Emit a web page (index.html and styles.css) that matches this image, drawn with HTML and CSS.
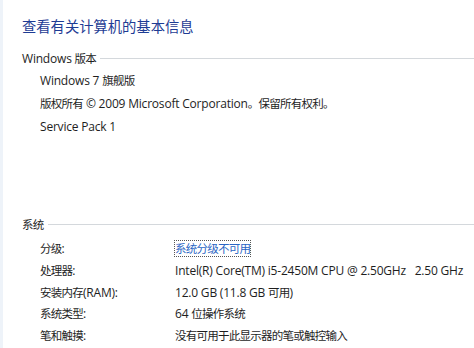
FILE: index.html
```html
<!DOCTYPE html>
<html lang="zh-CN">
<head>
    <meta charset="UTF-8">
    <title>系统</title>
    <link rel="stylesheet" href="styles.css">
</head>
<body>
    <div class="page">
        <h1 class="title">查看有关计算机的基本信息</h1>

        <div class="group-head">
            <span>Windows <span class="zh">版本</span></span>
            <span class="rule"></span>
        </div>
        <div class="edition">
            <div class="line">Windows 7 <span class="zh">旗舰版</span></div>
            <div class="line"><span class="zh">版权所有</span> © 2009 Microsoft Corporation<span class="zh">。保留所有权利。</span></div>
            <div class="line">Service Pack 1</div>
        </div>

        <div class="group-head system-head">
            <span class="zh">系统</span>
            <span class="rule"></span>
        </div>
        <div class="props">
            <div class="label"><span class="zh">分级</span>:</div>
            <div class="value"><a class="rating zh" href="#">系统分级不可用</a></div>

            <div class="label"><span class="zh">处理器</span>:</div>
            <div class="value">Intel(R) Core(TM) i5-2450M CPU @ 2.50GHz&nbsp;&nbsp;&nbsp;2.50 GHz</div>

            <div class="label"><span class="zh">安装内存</span>(RAM):</div>
            <div class="value">12.0 GB (11.8 GB <span class="zh">可用</span>)</div>

            <div class="label"><span class="zh">系统类型</span>:</div>
            <div class="value">64 <span class="zh">位操作系统</span></div>

            <div class="label"><span class="zh">笔和触摸</span>:</div>
            <div class="value zh">没有可用于此显示器的笔或触控输入</div>
        </div>
    </div>
</body>
</html>
```

FILE: styles.css
```css
body {
    margin: 0;
    background: #fff;
    font-family: "Open Sans", "Noto Sans CJK SC", sans-serif;
    font-size: 12px;
    letter-spacing: -0.2px;
    color: #1e1e1e;
}

/* CJK runs are a bit narrower than the full em in the original */
.zh {
    font-size: 11.5px;
    letter-spacing: -0.75px;
}

.page {
    border-left: 3px solid #eef3f9;
    min-height: 348px;
    box-sizing: border-box;
    padding: 0 0 0 19px;
}

.title {
    margin: 0;
    padding-top: 16px;
    font-size: 14.3px;
    font-weight: normal;
    letter-spacing: 0;
    line-height: 22px;
    color: #1e3c94;
}

.group-head {
    display: flex;
    align-items: center;
    margin-top: 9px;
    height: 22px;
}

.rule {
    flex: 1;
    height: 0;
    border-top: 1px solid #d4d8dc;
    margin-left: 4px;
    margin-top: 1px;
}

.edition {
    padding-left: 18px;
    margin-top: 0;
}

.line {
    line-height: 23px;
}

.system-head {
    margin-top: 75px;
}

.props {
    display: grid;
    grid-template-columns: 135px auto;
    padding-left: 18px;
    margin-top: 3px;
    line-height: 21.75px;
}

.rating {
    color: #2b66c4;
    text-decoration: none;
    outline: 1px dotted #555;
}
```
